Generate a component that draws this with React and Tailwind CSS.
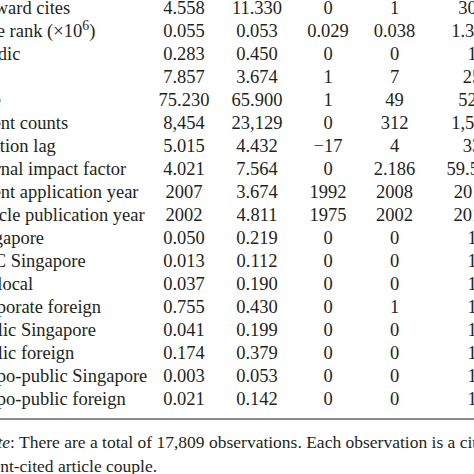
import React from 'react';

// Descriptive statistics, cropped view of a printed table
const rows = [
  { label: 'Forward cites', v: ['4.558', '11.330', '0', '1', '309'] },
  { label: <>Page rank (×10<sup>6</sup>)</>, v: ['0.055', '0.053', '0.029', '0.038', '1.306'] },
  { label: 'Nordic', v: ['0.283', '0.450', '0', '0', '1'] },
  { label: 'Age', v: ['7.857', '3.674', '1', '7', '25'] },
  { label: 'Size', v: ['75.230', '65.900', '1', '49', '523'] },
  { label: 'Patent counts', v: ['8,454', '23,129', '0', '312', '1,527'] },
  { label: 'Citation lag', v: ['5.015', '4.432', '\u221217', '4', '33'] },
  { label: 'Journal impact factor', v: ['4.021', '7.564', '0', '2.186', '59.558'] },
  { label: 'Patent application year', v: ['2007', '3.674', '1992', '2008', '2011'] },
  { label: 'Article publication year', v: ['2002', '4.811', '1975', '2002', '2010'] },
  { label: 'Singapore', v: ['0.050', '0.219', '0', '0', '1'] },
  { label: 'GLC Singapore', v: ['0.013', '0.112', '0', '0', '1'] },
  { label: 'All local', v: ['0.037', '0.190', '0', '0', '1'] },
  { label: 'Corporate foreign', v: ['0.755', '0.430', '0', '1', '1'] },
  { label: 'Public Singapore', v: ['0.041', '0.199', '0', '0', '1'] },
  { label: 'Public foreign', v: ['0.174', '0.379', '0', '0', '1'] },
  { label: 'Corpo-public Singapore', v: ['0.003', '0.053', '0', '0', '1'] },
  { label: 'Corpo-public foreign', v: ['0.021', '0.142', '0', '0', '1'] },
];

const cols = 'grid grid-cols-[179px_72px_74px_68px_65px_90px]';

export default function App() {
  return (
    <div className="w-[474px] h-[474px] overflow-hidden bg-white text-[#231f20] font-['Liberation_Serif',serif] text-[18.5px] leading-[23px]">
      <div className="w-[548px] -ml-[31px] -mt-[3px]">
        {/* Table body */}
        <div className="pb-[7px]">
          {rows.map((r, i) => (
            <div key={i} className={cols}>
              <div className="whitespace-nowrap">{r.label}</div>
              {r.v.map((x, j) => (
                <div key={j} className="text-center whitespace-nowrap">{x}</div>
              ))}
            </div>
          ))}
        </div>

        <div className="h-[2px] bg-[#8c8c8c]"></div>

        {/* Table note */}
        <p className="mt-[11px] pl-[2px] text-[17.5px] leading-[23.5px] indent-[6px] whitespace-nowrap">
          <i>Note</i>: There are a total of 17,809 observations. Each observation is a citing
          <br />
          patent-cited article couple.
        </p>
      </div>
    </div>
  );
}
